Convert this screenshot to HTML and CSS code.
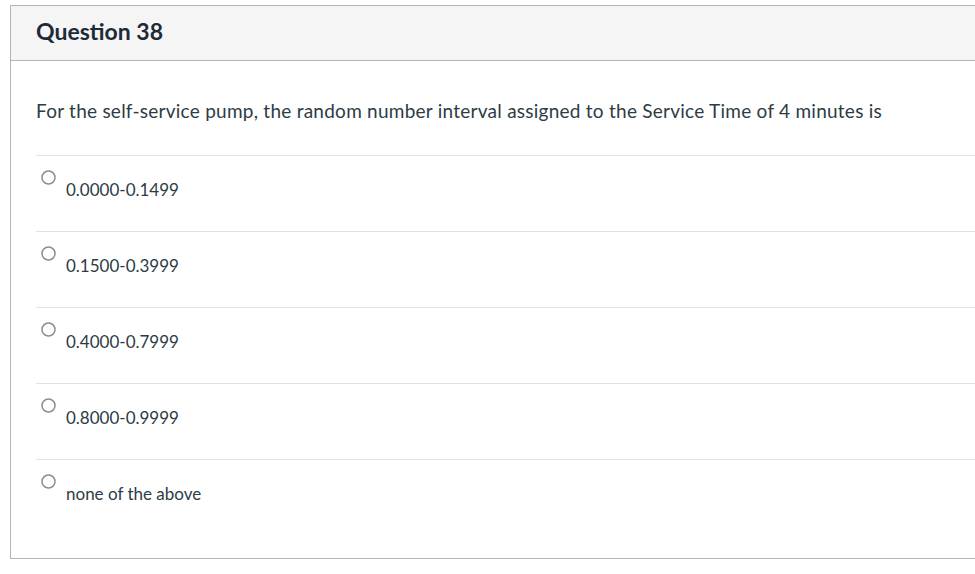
FILE: index.html
```html
<!DOCTYPE html>
<html>
<head>
<meta charset="utf-8">
<link rel="stylesheet" href="styles.css">
</head>
<body>
<div class="quiz">
  <div class="header"><h2 class="title">Question 38</h2></div>
  <div class="content">
    <p class="question">For the self-service pump, the random number interval assigned to the Service Time of 4 minutes is</p>
    <div class="answers">
      <div class="answer"><svg class="radio" width="15" height="15" viewBox="0 0 15 15"><circle cx="7.5" cy="7.5" r="6.5" fill="#fff" stroke="#8d8d8d" stroke-width="1.5"/></svg><span class="label">0.0000-0.1499</span></div>
      <div class="answer"><svg class="radio" width="15" height="15" viewBox="0 0 15 15"><circle cx="7.5" cy="7.5" r="6.5" fill="#fff" stroke="#8d8d8d" stroke-width="1.5"/></svg><span class="label">0.1500-0.3999</span></div>
      <div class="answer"><svg class="radio" width="15" height="15" viewBox="0 0 15 15"><circle cx="7.5" cy="7.5" r="6.5" fill="#fff" stroke="#8d8d8d" stroke-width="1.5"/></svg><span class="label">0.4000-0.7999</span></div>
      <div class="answer"><svg class="radio" width="15" height="15" viewBox="0 0 15 15"><circle cx="7.5" cy="7.5" r="6.5" fill="#fff" stroke="#8d8d8d" stroke-width="1.5"/></svg><span class="label">0.8000-0.9999</span></div>
      <div class="answer last"><svg class="radio" width="15" height="15" viewBox="0 0 15 15"><circle cx="7.5" cy="7.5" r="6.5" fill="#fff" stroke="#8d8d8d" stroke-width="1.5"/></svg><span class="label">none of the above</span></div>
    </div>
  </div>
</div>
</body>
</html>
```
FILE: styles.css
```css
html, body {
  margin: 0;
  padding: 0;
  background: #fff;
  overflow: hidden;
}
body {
  width: 975px;
  height: 574px;
  font-family: Lato, "Open Sans", sans-serif;
  color: #2d3b45;
}
.quiz {
  margin: 5px 0 0 10px;
  width: 1000px;
  border: 1px solid #b5b5b5;
  box-sizing: border-box;
}
.header {
  background: #f5f5f5;
  border-bottom: 1px solid #b5b5b5;
  height: 54px;
  padding-left: 25px;
  display: flex;
  align-items: center;
}
.title {
  margin: 0;
  font-size: 23px;
  font-weight: 700;
  color: #1e2a38;
  line-height: 28px;
  padding-bottom: 4px;
}
.content {
  padding: 38px 0 0 25px;
}
.question {
  margin: 0 0 32px 0;
  font-size: 19px;
  letter-spacing: 0.25px;
  line-height: 24px;
}
.answers {
  padding-bottom: 23px;
}
.answer {
  border-top: 1px solid #e2e2e2;
  height: 75px;
  display: flex;
  align-items: flex-start;
}
.radio {
  margin: 14px 0 0 5px;
  flex: none;
}
.label {
  margin-left: 10px;
  padding-top: 24px;
  font-size: 17px;
  line-height: 20px;
}
```
